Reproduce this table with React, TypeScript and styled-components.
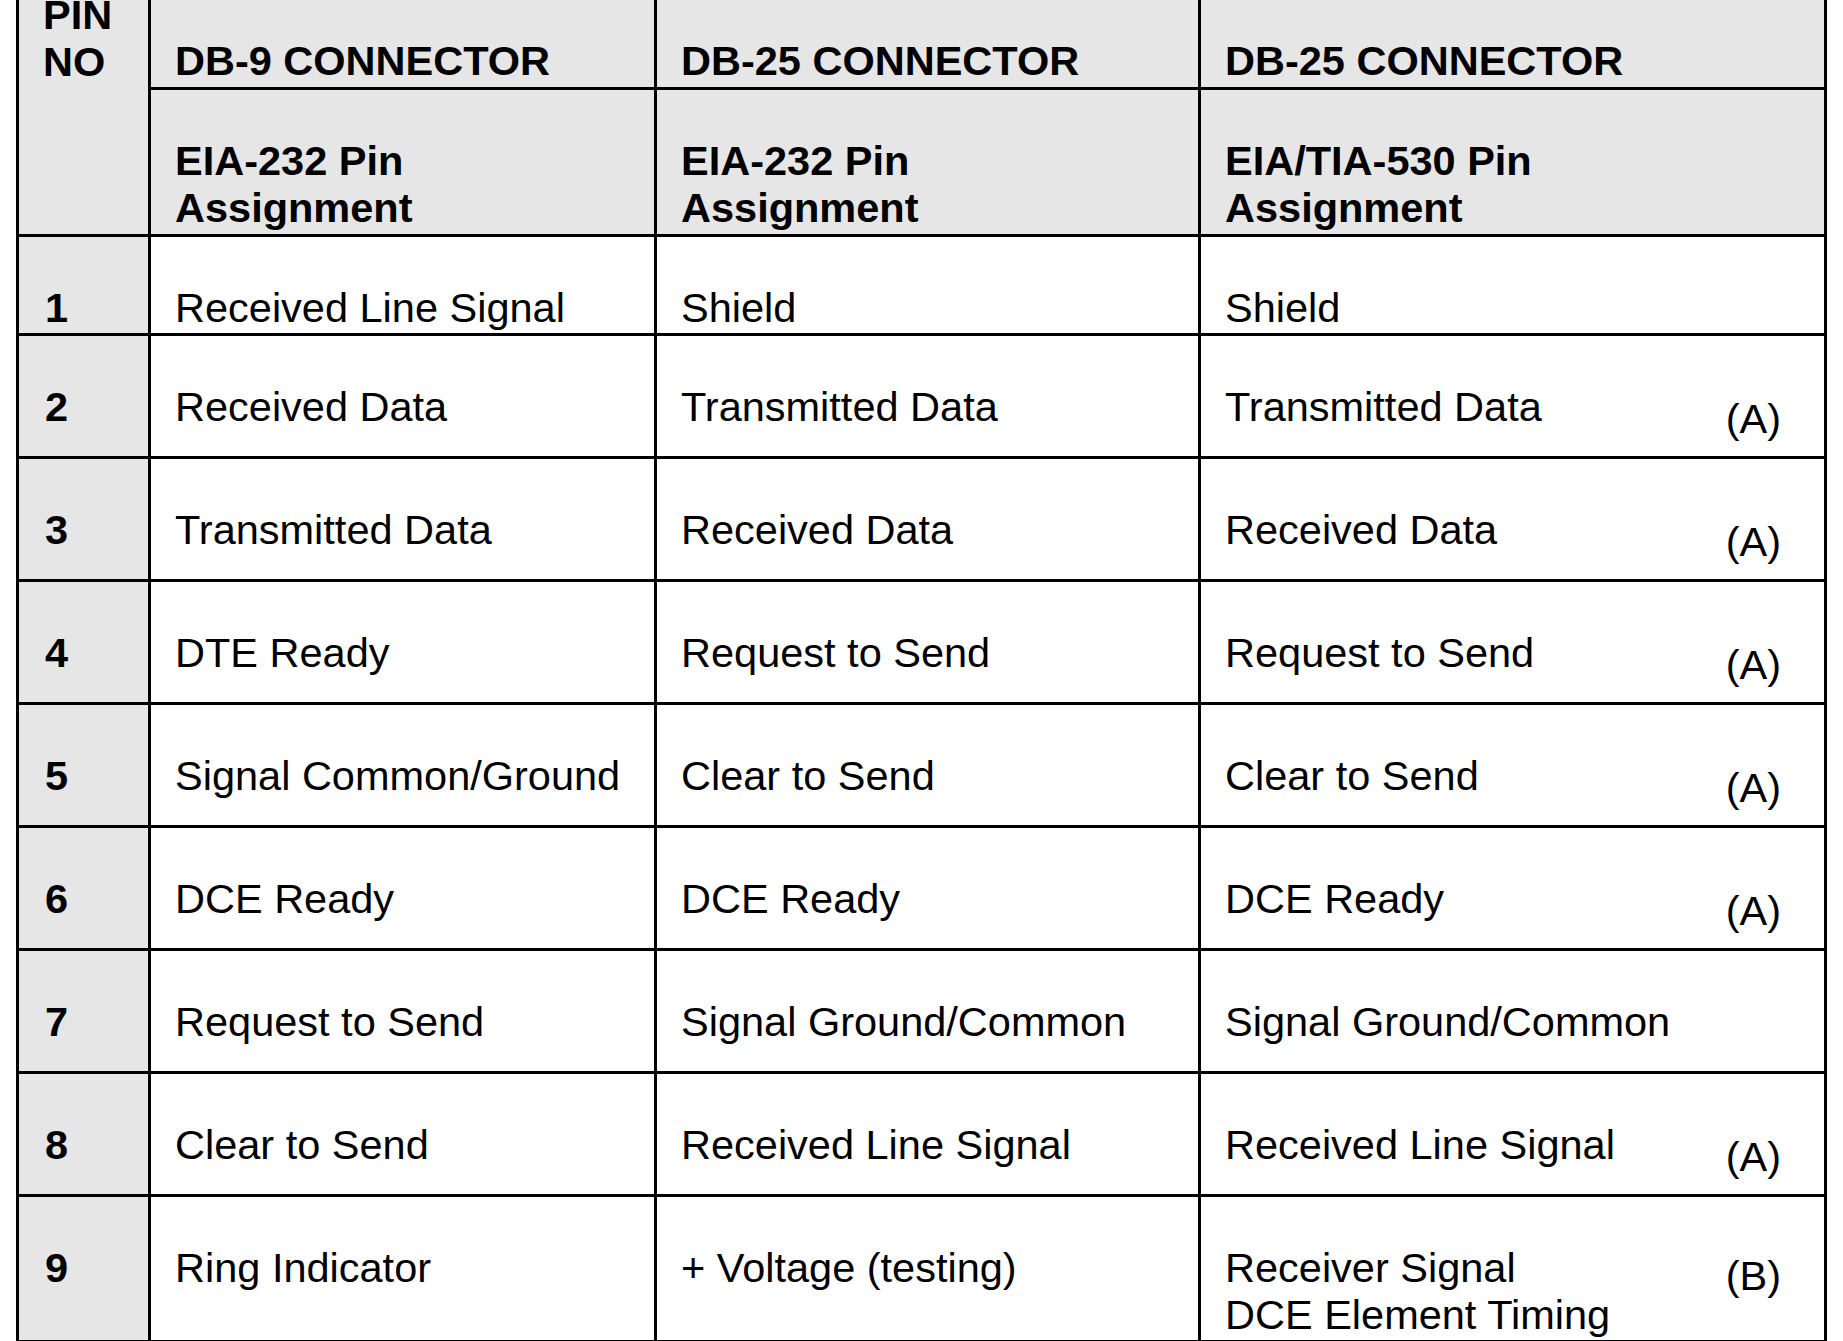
import React from 'react';
import styled, { createGlobalStyle } from 'styled-components';

const GlobalStyle = createGlobalStyle`
  html, body {
    margin: 0;
    padding: 0;
    background: #fff;
    overflow: hidden;
  }
`

const Page = styled.div`
  width: 1843px;
  height: 1341px;
  overflow: hidden;
  background: #fff;
`

const Table = styled.table`
  margin: -58px 0 0 16px;
  width: 1808px;
  table-layout: fixed;
  border-collapse: collapse;
  font-family: "Liberation Sans", Arial, Helvetica, sans-serif;
  font-size: 41.5px;
  line-height: 47px;
  color: #000;
`

const Row = styled.tr<{ $h: number }>`
  height: ${p => p.$h}px;
`

const HeadCell = styled.th<{ $bottom?: boolean; $pad?: number }>`
  background: #e6e6e6;
  border: 3px solid #000;
  text-align: left;
  font-weight: 700;
  white-space: nowrap;
  vertical-align: ${p => (p.$bottom ? 'bottom' : 'top')};
  padding: ${p => (p.$bottom ? '0 10px 3px 24px' : `${p.$pad ?? 46}px 10px 0 24px`)};
`

const PinCell = styled.td`
  background: #e6e6e6;
  border: 3px solid #000;
  font-weight: 700;
  vertical-align: top;
  padding: 47px 10px 0 26px;
`

const Cell = styled.td`
  background: #fff;
  border: 3px solid #000;
  vertical-align: top;
  white-space: nowrap;
  padding: 47px 20px 0 24px;
`

const SignalLine = styled.div`
  display: flex;
  align-items: flex-start;
`

const Note = styled.span<{ $drop: number }>`
  margin: ${p => p.$drop}px 23px 0 auto;
`

type Pin = {
  pin: string;
  db9: string;
  db25: string;
  rs530: React.ReactNode;
  note?: string;
  drop?: number;
  h: number;
}

const pins: Pin[] = [
  { pin: '1', db9: 'Received Line Signal', db25: 'Shield', rs530: 'Shield', h: 99 },
  { pin: '2', db9: 'Received Data', db25: 'Transmitted Data', rs530: 'Transmitted Data', note: '(A)', h: 123 },
  { pin: '3', db9: 'Transmitted Data', db25: 'Received Data', rs530: 'Received Data', note: '(A)', h: 123 },
  { pin: '4', db9: 'DTE Ready', db25: 'Request to Send', rs530: 'Request to Send', note: '(A)', h: 123 },
  { pin: '5', db9: 'Signal Common/Ground', db25: 'Clear to Send', rs530: 'Clear to Send', note: '(A)', h: 123 },
  { pin: '6', db9: 'DCE Ready', db25: 'DCE Ready', rs530: 'DCE Ready', note: '(A)', h: 123 },
  { pin: '7', db9: 'Request to Send', db25: 'Signal Ground/Common', rs530: 'Signal Ground/Common', h: 123 },
  { pin: '8', db9: 'Clear to Send', db25: 'Received Line Signal', rs530: 'Received Line Signal', note: '(A)', h: 123 },
  {
    pin: '9',
    db9: 'Ring Indicator',
    db25: '+ Voltage (testing)',
    rs530: (
      <>
        Receiver Signal
        <br />
        DCE Element Timing
      </>
    ),
    note: '(B)',
    drop: 8,
    h: 146,
  },
]

export default function App() {
  return (
    <Page>
      <GlobalStyle />
      <Table>
        <colgroup>
          <col style={{ width: 132 }} />
          <col style={{ width: 506 }} />
          <col style={{ width: 544 }} />
          <col style={{ width: 626 }} />
        </colgroup>
        <thead>
          <Row $h={145}>
            <HeadCell rowSpan={2}>
              PIN
              <br />
              NO
            </HeadCell>
            <HeadCell $bottom>DB-9 CONNECTOR</HeadCell>
            <HeadCell $bottom>DB-25 CONNECTOR</HeadCell>
            <HeadCell $bottom>DB-25 CONNECTOR</HeadCell>
          </Row>
          <Row $h={147}>
            <HeadCell $pad={47}>
              EIA-232 Pin
              <br />
              Assignment
            </HeadCell>
            <HeadCell $pad={47}>
              EIA-232 Pin
              <br />
              Assignment
            </HeadCell>
            <HeadCell $pad={47}>
              EIA/TIA-530 Pin
              <br />
              Assignment
            </HeadCell>
          </Row>
        </thead>
        <tbody>
          {pins.map(p => (
            <Row key={p.pin} $h={p.h}>
              <PinCell>{p.pin}</PinCell>
              <Cell>{p.db9}</Cell>
              <Cell>{p.db25}</Cell>
              <Cell>
                <SignalLine>
                  <div>{p.rs530}</div>
                  {p.note && <Note $drop={p.drop ?? 12}>{p.note}</Note>}
                </SignalLine>
              </Cell>
            </Row>
          ))}
        </tbody>
      </Table>
    </Page>
  )
}
